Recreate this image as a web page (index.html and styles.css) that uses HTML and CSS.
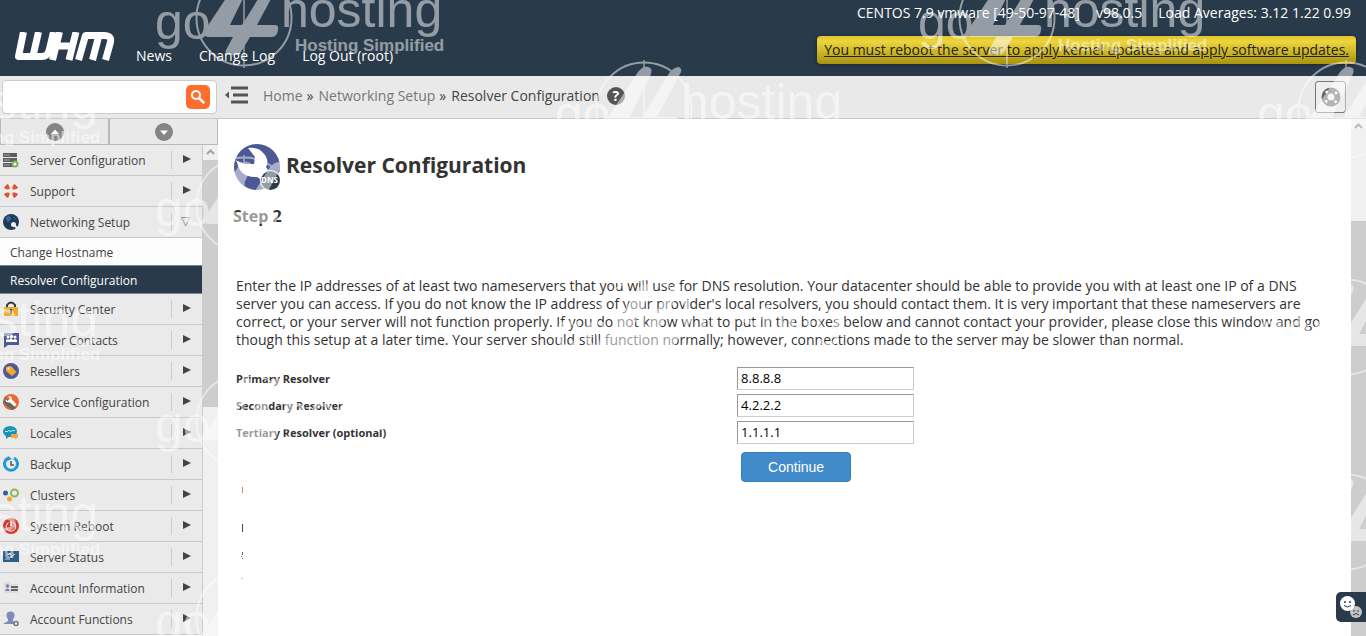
FILE: index.html
```html
<!DOCTYPE html>
<html lang="en">
<head>
<meta charset="utf-8">
<title>WHM - Resolver Configuration</title>
<link rel="stylesheet" href="styles.css">
</head>
<body>
<header class="top">
  <a class="logo" href="#" aria-label="WHM home">
    <svg width="102" height="30" viewBox="0 0 102 30" fill="none" stroke="#fff" stroke-linejoin="round">
      <path d="M8.500 0 3.500 24.500H27Q32 24.500 34 19L38.500 0M23.500 0 18 24" stroke-width="7"/>
      <path d="M44.500 0 37.500 28M41 14H59M61 0 54 28" stroke-width="7"/>
      <path d="M63.500 28 70.500 3.500H89Q97 3.500 95.500 10L90.500 28M83.500 5 77.500 28" stroke-width="7"/>
    </svg>
  </a>
  <nav class="top-nav">
    <a href="#">News</a><a href="#">Change Log</a><a href="#">Log Out (root)</a>
  </nav>
  <div class="top-info">
    <div class="stats"><span>CENTOS 7.9 vmware [49-50-97-48]</span><span>v98.0.5</span><span>Load Averages: 3.12 1.22 0.99</span></div>
    <a class="notice" href="#">You must reboot the server to apply kernel updates and apply software updates.</a>
  </div>
</header>

<div class="bar">
  <form class="search">
    <input type="text" aria-label="Search">
    <button type="button" aria-label="Search"><svg width="24" height="24" viewBox="0 0 24 24" fill="none" stroke="#fff"><circle cx="10" cy="10" r="4" stroke-width="2"/><path d="M13.500 13.500 17.500 17.500" stroke-width="2.500" stroke-linecap="round"/></svg></button>
  </form>
  <button class="collapse" type="button" aria-label="Collapse menu"><svg width="24" height="20" viewBox="0 0 24 20" fill="#555"><path d="M0 9 4 5.500V12.500zM6 .500H23V3.500H6zM8 7.500H23V10.500H8zM6 14.500H23V17.500H6z"/></svg></button>
  <nav class="crumbs">
    <a href="#">Home</a><i>»</i><a href="#">Networking Setup</a><i>»</i><span>Resolver Configuration</span>
    <a class="help" href="#" aria-label="Help">?</a>
  </nav>
  <button class="support" type="button" aria-label="Support">
    <svg width="20" height="20" viewBox="0 0 20 20"><circle cx="10" cy="10" r="6.500" fill="none" stroke="#666" stroke-width="6"/><circle cx="10" cy="10" r="6.500" fill="none" stroke="#fff" stroke-width="2.500" stroke-dasharray="2.500 7.710" transform="rotate(34 10 10)"/></svg>
  </button>
</div>

<div class="shell">
  <aside class="side">
    <div class="tabs">
      <button type="button" aria-label="Scroll up"><svg width="18" height="18" viewBox="0 0 18 18"><circle cx="9" cy="9" r="9" fill="#858585"/><path d="M5 11 9 6.500 13 11z" fill="#fff"/></svg></button>
      <button type="button" aria-label="Scroll down"><svg width="18" height="18" viewBox="0 0 18 18"><circle cx="9" cy="9" r="9" fill="#858585"/><path d="M5 7.500H13L9 12z" fill="#fff"/></svg></button>
    </div>
    <div class="side-body">
      <nav class="menu">
        <a class="item" href="#"><svg viewBox="0 0 16 16"><path d="M0 1H14V5H0zM0 6H14V10H0zM0 11H10V15H0z" fill="#5c5c5c"/><path d="M1 3H7M1 8H7M1 13H7" stroke="#aaa"/><circle cx="12" cy="12" r="2.500" fill="#fff" stroke="#7cb35a" stroke-width="2"/></svg><span>Server Configuration</span><b></b></a>
        <a class="item" href="#"><svg viewBox="0 0 16 16"><circle cx="8" cy="8" r="5.200" fill="none" stroke="#fbf3e4" stroke-width="4.500"/><path d="M1.500 5Q2.500 2.500 5 1.500L6.300 5.300 5.300 6.300zM11 1.500Q13.500 2.500 14.500 5L10.700 6.300 9.700 5.300zM14.500 11Q13.500 13.500 11 14.500L9.700 10.700 10.700 9.700zM5 14.500Q2.500 13.500 1.500 11L5.300 9.700 6.300 10.700z" fill="#e0503c" stroke="#e0503c"/></svg><span>Support</span><b></b></a>
        <a class="item" href="#"><svg viewBox="0 0 16 16"><circle cx="8" cy="8" r="8" fill="#1f3b5c"/><path d="M3 4 6 2 8 5 5 8zM10 3 13 5" fill="#3c6590" stroke="#3c6590"/><circle cx="10.500" cy="10.500" r="2.500" fill="#eee"/><path d="M11 11 15 15" stroke="#eee" stroke-width="2"/></svg><span>Networking Setup</span><b class="open"></b></a>
        <a class="sub" href="#">Change Hostname</a>
        <a class="sub active" href="#">Resolver Configuration</a>
        <a class="item" href="#"><svg viewBox="0 0 16 16"><path d="M4 8V4Q8-1 12 4V8" fill="none" stroke="#293a4a" stroke-width="2"/><rect x="1" y="6" width="14" height="9" rx="1" fill="#f0a92c"/><path d="M8 8V13" stroke="#293a4a" stroke-width="2"/></svg><span>Security Center</span><b></b></a>
        <a class="item" href="#"><svg viewBox="0 0 16 16"><path d="M1 1H16V13H5L1 16z" fill="#4e5a97"/><path d="M3 10V8L5 7 6 8 8 6 10 8 12 7 14 8V10z" fill="#fff"/><circle cx="5" cy="5" r="1.500" fill="#fff"/><circle cx="8.500" cy="4.500" r="1.700" fill="#fff"/><circle cx="12" cy="5" r="1.500" fill="#fff"/></svg><span>Server Contacts</span><b></b></a>
        <a class="item" href="#"><svg viewBox="0 0 16 16"><circle cx="8" cy="8" r="8" fill="#4e5a97"/><path d="M3 4 8 3 13.500 9 9 13 3 8z" fill="#f0a92c"/><circle cx="5.500" cy="5.500" r="1" fill="#fff"/></svg><span>Resellers</span><b></b></a>
        <a class="item" href="#"><svg viewBox="0 0 16 16"><circle cx="8" cy="8" r="8" fill="#f0682f"/><path d="M2 3 13 14 9 16 0 9z" fill="#666"/><path d="M2.500 5 4.500 7 7 4.500 5 2.500Q9 1.500 9 5.500L13.500 10.500 11.500 12.500 7 8.500Q2 9 2.500 5z" fill="#fff"/></svg><span>Service Configuration</span><b></b></a>
        <a class="item" href="#"><svg viewBox="0 0 16 16"><ellipse cx="7" cy="6.500" rx="7" ry="5.500" fill="#1695b8"/><path d="M3 10V14L7 11z" fill="#1695b8"/><path d="M2 6.500H5L6 5 8 7 9 5.500H12" stroke="#b9e3ee" fill="none"/><path d="M8 9H15V13H13L12 15V13H8z" fill="#f0a94a"/></svg><span>Locales</span><b></b></a>
        <a class="item" href="#"><svg viewBox="0 0 16 16" fill="none"><path d="M5 2A6.500 6.500 0 1 0 11 2" stroke="#1f9bd6" stroke-width="3"/><path d="M5 0 9 3 4 5z" fill="#1f9bd6"/><path d="M8 5V9H11" stroke="#555" stroke-width="1.500"/></svg><span>Backup</span><b></b></a>
        <a class="item" href="#"><svg viewBox="0 0 16 16"><circle cx="2.500" cy="6" r="2.500" fill="#2b6593"/><circle cx="11.500" cy="6" r="3.500" fill="none" stroke="#86b857" stroke-width="2"/><circle cx="6.500" cy="12" r="2.500" fill="#f0a92c"/></svg><span>Clusters</span><b></b></a>
        <a class="item" href="#"><svg viewBox="0 0 16 16"><circle cx="8" cy="8" r="8" fill="#d23b30"/><path d="M5.500 4.500A4.700 4.700 0 1 0 10.500 4.500" fill="none" stroke="#fff"/><path d="M8 3V8" stroke="#fff" stroke-width="1.500"/></svg><span>System Reboot</span><b></b></a>
        <a class="item" href="#"><svg viewBox="0 0 16 16"><path d="M0 2H16V13H0z" fill="#2d5f85"/><path d="M2 6H5L7 4 9 9 11 5 12 6M2 10H7" stroke="#c8dbe8" fill="none"/></svg><span>Server Status</span><b></b></a>
        <a class="item" href="#"><svg viewBox="0 0 16 16"><path d="M1 2H7V4H15V13H1z" fill="#ddd"/><circle cx="4.500" cy="6" r="1.700" fill="#777fae"/><path d="M2 11Q4.500 6 7 11z" fill="#777fae"/><path d="M8 7H15M8 10H15" stroke="#666" stroke-width="2"/></svg><span>Account Information</span><b></b></a>
        <a class="item" href="#"><svg viewBox="0 0 16 16"><circle cx="7.500" cy="4.500" r="4" fill="#828abb"/><path d="M5 7H10V10L13 13H0L5 10z" fill="#828abb"/><circle cx="13" cy="12.500" r="2" fill="#eee" stroke="#777" stroke-width="1.500"/></svg><span>Account Functions</span><b></b></a>
      </nav>
      <div class="scroll"><svg width="9" height="7" viewBox="0 0 9 7"><path d="M1 5 4.500 1.500 8 5" fill="none" stroke="#a3a3a3" stroke-width="2"/></svg><div class="thumb"></div></div>
    </div>
  </aside>

  <main class="main">
    <div class="title">
      <svg width="48" height="48" viewBox="0 0 48 48"><circle cx="24" cy="24" r="23" fill="#4d5995"/><path d="M15 5Q29 3 34 16Q35 21 33 24L37 30 30 38 24 34Q7 35 4 19L2 17 12 21 21 21 22 14z" fill="#fff"/><circle cx="37.500" cy="37.500" r="10.500" fill="#fff"/><circle cx="37.500" cy="37.500" r="9.500" fill="#293a4a"/><text x="28" y="40" fill="#fff" class="dns">DNS</text></svg>
      <h1>Resolver Configuration</h1>
    </div>
    <h2>Step 2</h2>
    <p>Enter the IP addresses of at least two nameservers that you will use for DNS resolution. Your datacenter should be able to provide you with at least one IP of a DNS server you can access. If you do not know the IP address of your provider's local resolvers, you should contact them. It is very important that these nameservers are correct, or your server will not function properly. If you do not know what to put in the boxes below and cannot contact your provider, please close this window and go though this setup at a later time. Your server should still function normally; however, connections made to the server may be slower than normal.</p>
    <form class="form">
      <label for="r1">Primary Resolver</label><input id="r1" type="text" value="8.8.8.8">
      <label for="r2">Secondary Resolver</label><input id="r2" type="text" value="4.2.2.2">
      <label for="r3">Tertiary Resolver (optional)</label><input id="r3" type="text" value="1.1.1.1">
      <button type="button">Continue</button>
    </form>
    <svg class="ticks" width="4" height="98" viewBox="0 0 4 98"><path d="M1.500 5V11" stroke="#c98f45"/><path d="M1.500 42V50" stroke="#7b3425"/><path d="M1.500 70V73M1.500 76V77M.500 74V75" stroke="#7c6250"/><path d="M0 96.500H2" stroke="#a08c78"/></svg>
  </main>
  <div class="scroll page-scroll"><svg width="9" height="7" viewBox="0 0 9 7"><path d="M1 5 4.500 1.500 8 5" fill="none" stroke="#777" stroke-width="2"/></svg><div class="thumb"></div></div>
</div>

<svg class="marks" aria-hidden="true">
  <defs>
    <g id="mark" opacity=".5" fill="#fff">
      <circle r="47.500" fill="none" stroke="#fff" stroke-width="2"/>
      <path d="M0-50V50" stroke="#fff" stroke-width="1.500"/>
      <path d="M-6-38Q-1-44 4-43 9-42 7-36L-14 7H-2L24-35Q29-43 35-43 39-41 36-36L13 7H31Q35 7 34 12 33 19 28 19H6L-3 34Q-6 38-13 37-20 37-18 32L-11 19H-36Q-42 18-39 12z"/>
      <text x="-89" y="21" class="mark-big">go</text>
      <text x="37" y="9" class="mark-big">hosting</text>
      <text x="51" y="33" class="mark-small">Hosting Simplified</text>
    </g>
  </defs>
  <use href="#mark" x="244" y="18"/><use href="#mark" x="1007" y="18"/>
  <use href="#mark" x="-100" y="110"/><use href="#mark" x="644" y="110"/><use href="#mark" x="1346" y="110"/>
  <use href="#mark" x="244" y="205"/><use href="#mark" x="1007" y="205"/>
  <use href="#mark" x="-100" y="327"/><use href="#mark" x="644" y="327"/><use href="#mark" x="1346" y="327"/>
  <use href="#mark" x="244" y="421"/><use href="#mark" x="1007" y="421"/>
  <use href="#mark" x="-100" y="522"/><use href="#mark" x="644" y="522"/><use href="#mark" x="1346" y="522"/>
  <use href="#mark" x="244" y="618"/><use href="#mark" x="1007" y="618"/>
</svg>

<button class="feedback" type="button" aria-label="Send feedback"><svg width="30" height="30" viewBox="0 0 30 30"><circle cx="20" cy="20" r="6" fill="#c4c4c4"/><path d="M17 19H19M21 19H23M17 23Q20 20 23 23" stroke="#293a4a" fill="none"/><circle cx="11.500" cy="11.500" r="7.500" fill="#fff"/><circle cx="9" cy="10" r="1" fill="#293a4a"/><circle cx="14" cy="10" r="1" fill="#293a4a"/><path d="M8 13.500Q11.500 16.500 15 13.500" stroke="#293a4a" fill="none"/></svg></button>
</body>
</html>
```
FILE: styles.css
```css
* { box-sizing: border-box; }
body { margin: 0; height: 100vh; display: flex; flex-direction: column; overflow: hidden; position: relative; background: #fff; color: #333; font: 14px/18px "Open Sans", sans-serif; }
a { color: inherit; text-decoration: none; }
button { border: 0; padding: 0; background: none; }
svg { display: block; flex: none; }

.top { flex: none; height: 76px; display: flex; background: #293a4a; color: #fff; }
.logo { padding: 32px 0 0 15px; }
.top-nav { display: flex; gap: 27px; padding: 47px 0 0 19px; white-space: nowrap; }
.top-info { margin-left: auto; padding: 4px 10px 0 0; display: flex; flex-direction: column; align-items: flex-end; gap: 14px; white-space: nowrap; }
.stats { display: flex; gap: 16px; padding-right: 5px; }
.notice { height: 28px; padding: 5px 7px; border-radius: 4px; background: linear-gradient(#e0c62e, #edd53c 20%, #a8920f); color: #222; text-decoration: underline; box-shadow: 0 1px 5px #1a2632; }

.bar { flex: none; height: 43px; display: flex; align-items: flex-start; background: #e9e9e9; border-bottom: 1px solid #c8c8c8; }
.search { display: flex; align-items: center; width: 215px; height: 34px; margin: 4px 0 0 2px; padding-right: 6px; background: #fff; border: 1px solid #ccc; border-radius: 4px; }
.search input { flex: 1; min-width: 0; border: 0; background: none; outline: 0; }
.search button { border-radius: 5px; background: #ff6c2c; }
.collapse { margin: 10px 0 0 8px; }
.crumbs { display: flex; align-items: center; padding: 11px 0 0 14px; color: #444; white-space: nowrap; }
.crumbs a { color: #777; }
.crumbs i { font-style: normal; margin: 0 5px 0 4px; }
.crumbs .help { width: 18px; height: 18px; margin-left: 7px; border-radius: 9px; background: #555; color: #fff; font-weight: 700; text-align: center; }
.support { margin: 5px 20px 0 auto; width: 31px; height: 32px; display: grid; place-items: center; border: 1px solid #777; border-radius: 3px; background: #eee; }

.shell { flex: 1; min-height: 0; display: flex; }
.side { flex: none; width: 218px; display: flex; flex-direction: column; overflow: hidden; }
.tabs { flex: none; height: 26px; display: flex; border-bottom: 1px solid #b9b9b9; }
.tabs button { flex: 1; display: grid; place-items: center; background: #e9e9e9; border-left: 1px solid #b9b9b9; border-right: 1px solid #b9b9b9; }
.side-body { flex: 1; min-height: 0; display: flex; }
.menu { flex: 1; overflow: hidden; color: #444; font-size: 12px; border-right: 1px solid #ccc; }
.item { display: flex; align-items: center; height: 31px; padding-left: 3px; gap: 11px; background: #eaeaea; border-bottom: 1px solid #c8c8c8; }
.item svg { width: 16px; height: 16px; }
.item span { padding-top: 2px; }
.item b { width: 31px; height: 18px; margin-left: auto; border-left: 1px solid #ccc; font-weight: 400; }
.item b::before { content: ""; display: block; margin: 4px 0 0 11px; width: 0; border: 4px solid transparent; border-left: 8px solid #444; border-right: 0; }
.item .open::before { content: "▽"; margin: 0 0 0 9px; width: auto; border: 0; font-size: 12px; line-height: 16px; color: #777; }
.sub { display: block; height: 28px; padding: 6px 10px 3px; background: #fcfcfc; border-bottom: 1px solid #789; }
.sub.active { background: #293a4a; color: #fff; }
.scroll { flex: none; width: 15px; background: #f0f0f0; }
.scroll svg { margin: 4px auto; }
.scroll .thumb { height: 247px; background: #cdcdcd; }
.page-scroll { display: flex; flex-direction: column; }
.page-scroll .thumb { flex: 1; margin-top: 87px; }

.main { flex: 1; min-width: 0; padding: 24px 30px 0 18px; }
.title { display: flex; align-items: center; gap: 5px; margin-left: -3px; }
.dns { font: 700 8px "Open Sans", sans-serif; }
h1 { margin: 0 0 4px; font-size: 21px; line-height: 30px; }
h2 { margin: 14px 0 0 -3px; font-size: 16px; line-height: 22px; font-weight: 700; }
p { margin: 50px 0 18px; }
.form { display: grid; grid-template-columns: 46% 1fr; row-gap: 4px; align-items: center; }
.form label { font-size: 11px; font-weight: 700; }
.form input { width: 177px; height: 23px; margin-left: 2px; padding: 0 3px 2px; border: 1px solid #ccc; border-color: #999 #ccc #ccc #999; font: 13px "Open Sans", sans-serif; color: #000; }
.form button { grid-column: 2; width: 110px; height: 30px; margin: 4px 0 0 6px; border: 1px solid #357ebd; border-radius: 4px; background: #428bca; color: #fff; font: 14px "Liberation Sans", Arial, sans-serif; }
.ticks { margin-left: 5px; }

.marks { position: absolute; inset: 0; width: 100%; height: 100%; pointer-events: none; overflow: hidden; }
.mark-big { font: 50px "Liberation Sans", Arial, sans-serif; }
.mark-small { font: bold 17px "Liberation Sans", Arial, sans-serif; }
.feedback { position: absolute; right: 0; bottom: 14px; border-radius: 5px 0 0 5px; background: #293a4a; }
```
